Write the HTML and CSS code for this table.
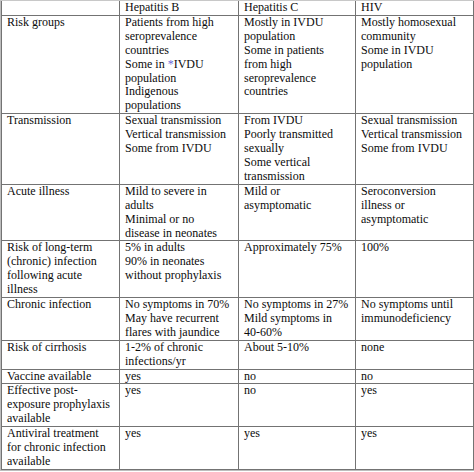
FILE: index.html
```html
<!DOCTYPE html>
<html>
<head>
<meta charset="utf-8">
<link rel="stylesheet" href="styles.css">
</head>
<body>
<div class="frame">
<table class="cmp">
<colgroup>
<col class="c1"><col class="c2"><col class="c3"><col class="c4">
</colgroup>
<tr class="hdr"><td></td><td>Hepatitis B</td><td>Hepatitis C</td><td>HIV</td></tr>
<tr><td>Risk groups</td><td>Patients from high<br>seroprevalence<br>countries<br>Some in <span class="ref">*</span>IVDU<br>population<br>Indigenous<br>populations</td><td>Mostly in IVDU<br>population<br>Some in patients<br>from high<br>seroprevalence<br>countries</td><td>Mostly homosexual<br>community<br>Some in IVDU<br>population</td></tr>
<tr><td>Transmission</td><td>Sexual transmission<br>Vertical transmission<br>Some from IVDU</td><td>From IVDU<br>Poorly transmitted<br>sexually<br>Some vertical<br>transmission</td><td>Sexual transmission<br>Vertical transmission<br>Some from IVDU</td></tr>
<tr><td>Acute illness</td><td>Mild to severe in<br>adults<br>Minimal or no<br>disease in neonates</td><td>Mild or<br>asymptomatic</td><td>Seroconversion<br>illness or<br>asymptomatic</td></tr>
<tr><td>Risk of long-term<br>(chronic) infection<br>following acute<br>illness</td><td>5% in adults<br>90% in neonates<br>without prophylaxis</td><td>Approximately 75%</td><td>100%</td></tr>
<tr><td>Chronic infection</td><td>No symptoms in 70%<br>May have recurrent<br>flares with jaundice</td><td>No symptoms in 27%<br>Mild symptoms in<br>40-60%</td><td>No symptoms until<br>immunodeficiency</td></tr>
<tr><td>Risk of cirrhosis</td><td>1-2% of chronic<br>infections/yr</td><td>About 5-10%</td><td>none</td></tr>
<tr><td>Vaccine available</td><td>yes</td><td>no</td><td>no</td></tr>
<tr><td>Effective post-<br>exposure prophylaxis<br>available</td><td>yes</td><td>no</td><td>yes</td></tr>
<tr><td>Antiviral treatment<br>for chronic infection<br>available</td><td>yes</td><td>yes</td><td>yes</td></tr>
</table>
</div>
</body>
</html>
```
FILE: styles.css
```css
html, body {
  margin: 0;
  padding: 0;
  background: #ffffff;
}
.frame {
  width: 472px;
  border: 1px solid #bdbdbd;
  border-top: 1px solid #c8c8c8;
}
.cmp {
  width: 472px;
  border-collapse: collapse;
  table-layout: fixed;
  font-family: "Liberation Serif", "Times New Roman", serif;
  font-size: 12px;
  line-height: 13.9px;
  color: #0c0c0c;
}
.c1 { width: 118px; }
.c2 { width: 119px; }
.c3 { width: 117px; }
.c4 { width: 118px; }
.cmp td {
  border: 1px solid #737373;
  padding: 0 2px 0 5px;
  vertical-align: top;
  white-space: nowrap;
  overflow: hidden;
}
.cmp .hdr td {
  border-top: 0;
}
.ref {
  color: #6a6ad8;
}
```
